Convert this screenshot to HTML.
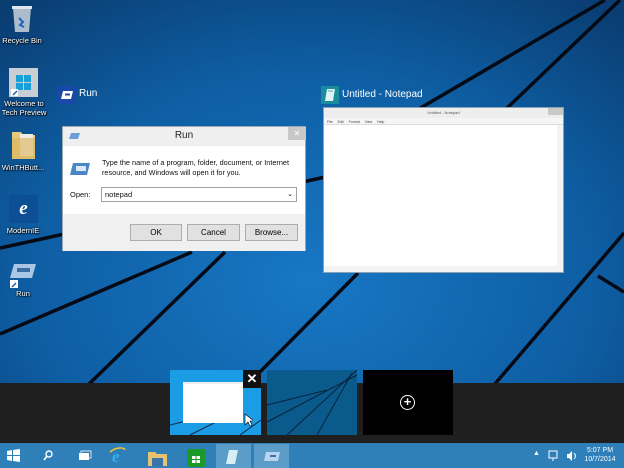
<!DOCTYPE html>
<html><head><meta charset="utf-8"><style>
*{margin:0;padding:0;box-sizing:border-box}
body{width:624px;height:468px;overflow:hidden;position:relative;font-family:"Liberation Sans",sans-serif;background:#0c4f8e}
.abs{position:absolute}
.lbl{position:absolute;color:#fff;font-size:7.5px;text-align:center;width:50px;text-shadow:0 0 2px #000,1px 1px 1px #000;line-height:9px}
.btn{position:absolute;top:224px;height:17px;border:1px solid #adadad;background:#e1e1e1;font-size:8px;text-align:center;line-height:15px;color:#000}
</style></head><body>
<svg class="abs" style="left:0;top:0" width="624" height="468">
<defs><radialGradient id="g" cx="0.5" cy="0.6" r="0.75">
<stop offset="0" stop-color="#1877c4"/><stop offset="0.6" stop-color="#0e5ea3"/><stop offset="1" stop-color="#0a3d72"/></radialGradient></defs>
<rect width="624" height="468" fill="url(#g)"/>
<g stroke="#050a14" stroke-width="3.5" fill="none">
<line x1="0" y1="248" x2="330" y2="176"/>
<line x1="605" y1="0" x2="400" y2="120"/>
<line x1="620" y1="0" x2="505" y2="110"/>
<line x1="0" y1="334" x2="192" y2="252"/>
<line x1="88" y1="385" x2="225" y2="252"/>
<line x1="358" y1="273" x2="247" y2="385"/>
<line x1="624" y1="233" x2="494" y2="385"/>
<line x1="598" y1="276" x2="624" y2="292"/>
</g>
</svg>
<svg class="abs" style="left:10px;top:4px" width="24" height="30"><path d="M3 4h18l-2 24H5z" fill="#c8d4dc" opacity=".85"/><rect x="2" y="2" width="20" height="3" fill="#dfe7ee"/><path d="M9 14l4 4-3 3 4 2" stroke="#1d63c4" stroke-width="2" fill="none"/></svg>
<div class="lbl" style="left:-3px;top:36px">Recycle Bin</div>
<div class="abs" style="left:9px;top:68px;width:29px;height:29px;background:#c9ced3"><svg width="29" height="29"><g fill="#1aa0d8"><rect x="7" y="7" width="7" height="7"/><rect x="15" y="7" width="7" height="7"/><rect x="7" y="15" width="7" height="7"/><rect x="15" y="15" width="7" height="7"/></g><rect x="2" y="21" width="7" height="7" fill="#fff"/><path d="M4 27l4-4" stroke="#1c5cb2" stroke-width="1.5"/></svg></div>
<div class="lbl" style="left:-1px;top:99px">Welcome to<br>Tech Preview</div>
<svg class="abs" style="left:11px;top:130px" width="26" height="30"><path d="M1 2h9l2 3h12v24H1z" fill="#e6c97a"/><rect x="9" y="4" width="13" height="22" fill="#f0ece0"/><path d="M1 8h23v21H1z" fill="#d8b45c" opacity=".6"/></svg>
<div class="lbl" style="left:-2px;top:163px">WinTHButt...</div>
<div class="abs" style="left:9px;top:195px;width:29px;height:28px;background:#0d4f94;color:#fff;font:italic bold 19px 'Liberation Serif',serif;text-align:center;line-height:27px">e</div>
<div class="lbl" style="left:-2px;top:226px">ModernIE</div>
<svg class="abs" style="left:9px;top:262px" width="30" height="30"><path d="M5 2h22l-4 14H1z" fill="#a9c6e4"/><rect x="8" y="6" width="13" height="4" fill="#3b6ea5"/><rect x="1" y="18" width="8" height="8" fill="#fff"/><path d="M3 25l4-4" stroke="#1c5cb2" stroke-width="1.5"/></svg>
<div class="lbl" style="left:-2px;top:289px">Run</div>
<div class="abs" style="left:58px;top:86px;width:18px;height:18px;background:#1848a8"><svg width="18" height="18"><path d="M5 5h10l-2 8H3z" fill="#fff"/><rect x="7" y="7.5" width="5" height="2" fill="#1848a8"/></svg></div>
<div class="abs" style="left:79px;top:88px;color:#fff;font-size:10px">Run</div>
<div class="abs" style="left:62px;top:126px;width:244px;height:125px;background:#fff;border:1px solid #9aa8b4">
<div class="abs" style="left:0;top:0;width:242px;height:19px;background:#efefef"></div>
<svg class="abs" style="left:6px;top:5px" width="11" height="8"><path d="M2 1h9l-2 6H0z" fill="#6aa0d8"/></svg>
<div class="abs" style="left:0;top:3px;width:242px;text-align:center;font-size:10px;color:#222">Run</div>
<div class="abs" style="left:225px;top:0;width:18px;height:13px;background:#c8c8c8;color:#fff;font-size:8px;text-align:center;line-height:13px">✕</div>
<svg class="abs" style="left:7px;top:35px" width="20" height="14"><path d="M3 1h17l-3 12H0z" fill="#4a86c8"/><rect x="6" y="4" width="10" height="5" fill="#dbe9f7"/></svg>
<div class="abs" style="left:39px;top:31px;font-size:7.3px;line-height:9.5px;color:#111;width:200px">Type the name of a program, folder, document, or Internet resource, and Windows will open it for you.</div>
<div class="abs" style="left:7px;top:63px;font-size:7.5px;color:#111">Open:</div>
<div class="abs" style="left:38px;top:60px;width:196px;height:15px;border:1px solid #a0a0a0;font-size:7.5px;padding:2px 3px;color:#111">notepad<span style="position:absolute;right:3px;top:2px;font-size:7px">⌄</span></div>
<div class="abs" style="left:0;top:87px;width:242px;height:37px;background:#f0f0f0"></div>
</div>
<div class="btn" style="left:130px;width:52px">OK</div>
<div class="btn" style="left:187px;width:53px">Cancel</div>
<div class="btn" style="left:245px;width:53px">Browse...</div>
<div class="abs" style="left:321px;top:86px;width:18px;height:18px;background:#1a8c9c"><svg width="18" height="18"><path d="M6 3h8l-2 12H4z" fill="#dff2f5"/><path d="M7 5l5 0" stroke="#6ab" /></svg></div>
<div class="abs" style="left:342px;top:89px;color:#fff;font-size:10px">Untitled - Notepad</div>
<div class="abs" style="left:323px;top:107px;width:241px;height:166px;background:#fff;border:1px solid #8aa2b8">
<div class="abs" style="left:0;top:0;width:239px;height:10px;background:#eee;font-size:4px;text-align:center;line-height:10px;color:#555">Untitled - Notepad</div>
<div class="abs" style="left:224px;top:0;width:15px;height:7px;background:#c8c8c8"></div>
<div class="abs" style="left:0;top:10px;width:239px;height:7px;background:#f5f5f5;border-bottom:1px solid #ddd;font-size:3.5px;color:#444;padding:2px 3px;word-spacing:4px">File Edit Format View Help</div>
<div class="abs" style="left:0;top:158px;width:239px;height:6px;background:#f3f3f3"></div>
<div class="abs" style="left:233px;top:17px;width:6px;height:141px;background:#f3f3f3"></div>
</div>
<div class="abs" style="left:0;top:383px;width:624px;height:60px;background:#1f1f1f"></div>
<div class="abs" style="left:170px;top:370px;width:91px;height:65px;background:#1b9de6;overflow:hidden">
<svg class="abs" width="91" height="65"><g stroke="#0b2a4a" stroke-width="1"><line x1="0" y1="55" x2="60" y2="40"/><line x1="20" y1="65" x2="50" y2="50"/><line x1="70" y1="65" x2="91" y2="50"/></g></svg>
<div class="abs" style="left:13px;top:12px;width:60px;height:41px;background:#fff;border-top:2px solid #eee"></div>
</div>
<div class="abs" style="left:243px;top:370px;width:18px;height:18px;background:#111;color:#fff;font-size:13px;font-weight:bold;text-align:center;line-height:18px">✕</div>
<svg class="abs" style="left:244px;top:413px" width="9" height="14"><path d="M1 1v11l3-3 2 4 2-1-2-4h4z" fill="#fff" stroke="#000" stroke-width=".6"/></svg>
<div class="abs" style="left:267px;top:370px;width:90px;height:65px;background:#0b5a8c;overflow:hidden">
<svg width="90" height="65"><g stroke="#07233a" stroke-width="1"><line x1="0" y1="52" x2="90" y2="5"/><line x1="20" y1="65" x2="90" y2="0"/><line x1="50" y1="65" x2="85" y2="3"/><line x1="0" y1="35" x2="60" y2="20"/></g></svg></div>
<div class="abs" style="left:363px;top:370px;width:90px;height:65px;background:#000"></div>
<div class="abs" style="left:400px;top:395px;width:15px;height:15px;border:1.5px solid #fff;border-radius:50%;color:#fff;font-size:13px;line-height:11px;text-align:center;font-weight:bold">+</div>
<div class="abs" style="left:0;top:443px;width:624px;height:25px;background:#2f7fb8"></div>
<svg class="abs" style="left:0;top:443px" width="300" height="25">
<g fill="#fff"><path d="M7 8l5-1v5H7zM13 7l7-1v6h-7zM7 13h5v5l-5-1zM13 13h7v6l-7-1z"/></g>
<circle cx="49" cy="11" r="3" stroke="#fff" stroke-width="1.4" fill="none"/><line x1="47" y1="13" x2="44" y2="17" stroke="#fff" stroke-width="1.6"/>
<rect x="79" y="10" width="10" height="7" fill="#fff"/><rect x="81" y="8" width="10" height="7" fill="none" stroke="#fff" stroke-width=".8"/>
<text x="112" y="19" font-family="Liberation Serif" font-style="italic" font-weight="bold" font-size="17" fill="#3ab0f0">e</text>
<path d="M110 9c6-5 14-5 15-2" stroke="#f3c632" stroke-width="1.5" fill="none"/>
<path d="M148 9h7l2 2h10v12h-19z" fill="#e6c270"/><rect x="152" y="15" width="11" height="8" fill="#3a74a8"/>
<rect x="187" y="6" width="18" height="18" fill="#1b9a2a"/><g fill="#fff"><rect x="192" y="13" width="3.5" height="3"/><rect x="196.5" y="13" width="3.5" height="3"/><rect x="192" y="17" width="3.5" height="3"/><rect x="196.5" y="17" width="3.5" height="3"/></g>
<rect x="216" y="1" width="35" height="24" fill="#5c9cc8"/><rect x="254" y="1" width="35" height="24" fill="#5c9cc8"/>
<path d="M229 7h9l-3 14h-9z" fill="#d8eef0"/>
<path d="M266 9h14l-2 9h-14z" fill="#b8d4ee"/><rect x="270" y="12" width="6" height="2" fill="#3a70b0"/>
</svg>
<div class="abs" style="left:533px;top:450px;color:#fff;font-size:7px">▲</div>
<svg class="abs" style="left:548px;top:450px" width="30" height="12"><rect x="1" y="1" width="8" height="7" fill="none" stroke="#fff"/><path d="M5 8v3" stroke="#fff"/><path d="M19 4h2l3-3v10l-3-3h-2z" fill="#fff"/><path d="M26 3c2 2 2 4 0 6" stroke="#fff" fill="none"/></svg>
<div class="abs" style="left:580px;top:446px;width:40px;color:#fff;font-size:7px;text-align:center;line-height:9px">5:07 PM<br>10/7/2014</div>
</body></html>
